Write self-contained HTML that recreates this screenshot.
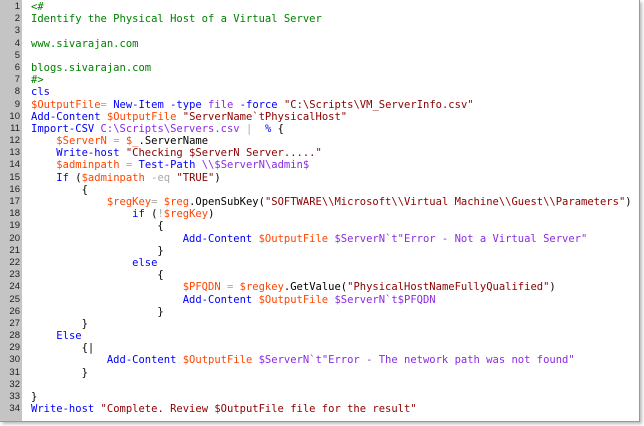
<!DOCTYPE html>
<html><head><style>
body{margin:0;width:644px;height:426px;background:#fff;overflow:hidden;position:relative;font-family:"Liberation Mono",monospace;}
#frame{position:absolute;left:0;top:0;width:639px;height:421px;border-right:1px solid #999;border-bottom:1px solid #999;box-shadow:2px 2px 3px #bbb;background:#fff;}
#gut{position:absolute;left:0;top:0;width:22px;height:421px;background:#c4c4c4;}
pre{margin:0;position:absolute;top:1px;font-size:10.5px;line-height:12.18px;}
#nums{left:0;width:20px;text-align:right;color:#222;font-family:"Liberation Sans",sans-serif;font-size:9.5px;}
#code{left:31px;color:#000;}
.c{color:#008000}.v{color:#ff4500}.k{color:#0000ff}.s{color:#8b0000}.p{color:#8a2be2}.o{color:#a9a9a9}
</style></head><body>
<div id="frame"><div id="gut"></div>
<pre id="nums">1
2
3
4
5
6
7
8
9
10
11
12
13
14
15
16
17
18
19
20
21
22
23
24
25
26
27
28
29
30
31
32
33
34</pre>
<pre id="code"><span class="c">&lt;#
Identify the Physical Host of a Virtual Server

www.sivarajan.com

blogs.sivarajan.com
#&gt;</span>
<span class="k">cls</span>
<span class="v">$OutputFile</span><span class="o">=</span> <span class="k">New-Item</span> <span class="k">-type</span> <span class="p">file</span> <span class="k">-force</span> <span class="s">"C:\Scripts\VM_ServerInfo.csv"</span>
<span class="k">Add-Content</span> <span class="v">$OutputFile</span> <span class="s">"ServerName`tPhysicalHost"</span>
<span class="k">Import-CSV</span> <span class="p">C:\Scripts\Servers.csv</span> <span class="o">|</span>  <span class="k">%</span> {
    <span class="v">$ServerN</span> <span class="o">=</span> <span class="v">$_</span>.ServerName
    <span class="k">Write-host</span> <span class="s">"Checking $ServerN Server....."</span>
    <span class="v">$adminpath</span> <span class="o">=</span> <span class="k">Test-Path</span> <span class="p">\\$ServerN\admin$</span>
    <span class="k">If</span> (<span class="v">$adminpath</span> <span class="o">-eq</span> <span class="s">"TRUE"</span>)
        {
            <span class="v">$regKey</span><span class="o">=</span> <span class="v">$reg</span>.OpenSubKey(<span class="s">"SOFTWARE\\Microsoft\\Virtual Machine\\Guest\\Parameters"</span>)
                <span class="k">if</span> (<span class="o">!</span><span class="v">$regKey</span>)
                    {
                        <span class="k">Add-Content</span> <span class="v">$OutputFile</span> <span class="p">$ServerN`t"Error - Not a Virtual Server"</span>
                    }
                <span class="k">else</span>
                    {
                        <span class="v">$PFQDN</span> <span class="o">=</span> <span class="v">$regkey</span>.GetValue(<span class="s">"PhysicalHostNameFullyQualified"</span>)
                        <span class="k">Add-Content</span> <span class="v">$OutputFile</span> <span class="p">$ServerN`t$PFQDN</span>
                    }
        }
    <span class="k">Else</span>
        {|
            <span class="k">Add-Content</span> <span class="v">$OutputFile</span> <span class="p">$ServerN`t"Error - The network path was not found"</span>
        }

}
<span class="k">Write-host</span> <span class="s">"Complete. Review $OutputFile file for the result"</span></pre>
</div>
</body></html>
